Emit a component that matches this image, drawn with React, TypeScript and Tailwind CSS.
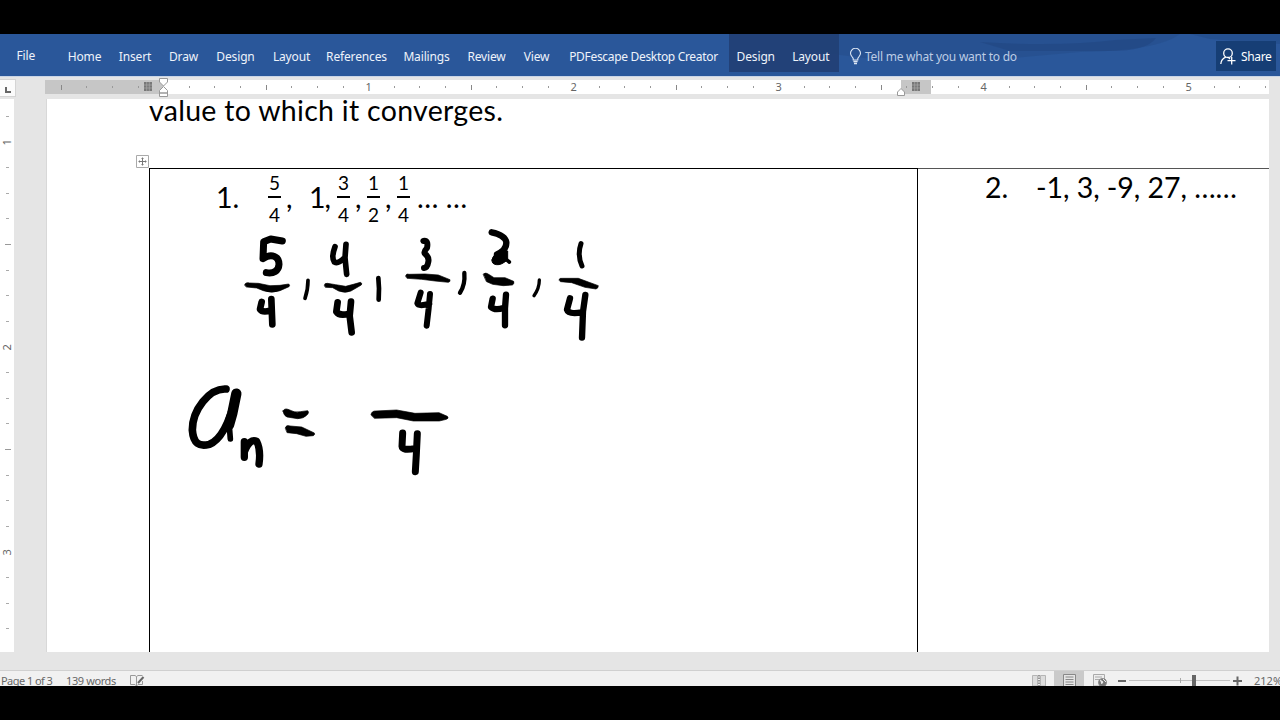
import React from "react";

const TABS: [string, string][] = [
  ["Home", "w-[52px]"],
  ["Insert", "w-[49px]"],
  ["Draw", "w-[48px]"],
  ["Design", "w-[56px]"],
  ["Layout", "w-[56px]"],
  ["References", "w-[74px]"],
  ["Mailings", "w-[66px]"],
  ["Review", "w-[54px]"],
  ["View", "w-[46px]"],
];

function Ribbon() {
  return (
    <header className="relative flex h-[42px] shrink-0 overflow-hidden bg-[#2a579a] text-[12px] tracking-[-0.15px] text-[#eef3fa]">
      <svg className="absolute left-[790px] top-0" width="490" height="42">
        <path d="M10 0H390Q368 17 290 18L200 26H90L10 16Z" fill="#234b88" opacity=".45" />
        <path d="M190 8Q270 13 325 6L366 4Q357 17 320 17H220Z" fill="#1e437d" opacity=".45" />
        <path d="M400 0H490V10L420 5Z" fill="#234b88" opacity=".6" />
      </svg>
      <div className="relative flex w-full">
        <div className="w-[58.5px] pl-[16.5px] leading-[43px]">File</div>
        <nav className="flex leading-[46px]">
          {TABS.map(([label, width]) => (
            <div key={label} className={`${width} whitespace-nowrap text-center`}>{label}</div>
          ))}
          <div className="w-[168px] whitespace-nowrap text-center tracking-[-0.32px]">PDFescape Desktop Creator</div>
        </nav>
        <div className="ml-[1.5px] flex h-[38px] w-[110px] bg-[#213f74]/90 leading-[46px]">
          <div className="w-[54px] text-center">Design</div>
          <div className="w-[57px] text-center">Layout</div>
        </div>
        <div className="flex flex-1 pl-[10px] leading-[46px] text-[#bccce5]">
          <svg className="mr-[3px] mt-[14px]" width="13" height="18" viewBox="0 0 13 18" fill="none" stroke="#dce6f4" strokeWidth="1.1">
            <path d="M4.2 12V10.5C3.5 8.8 1.5 7.7 1.5 5.3A5 5 0 0 1 11.5 5.3C11.5 7.7 9.5 8.8 8.8 10.5V12Z" />
            <path d="M4.4 13.5H8.6M5 15.5H8" strokeWidth="1.5" />
          </svg>
          <span className="tracking-[-0.24px]">Tell me what you want to do</span>
        </div>
        <div className="mr-[4px] mt-[7px] flex h-[30px] w-[60px] bg-[#163e75] pl-[4px] leading-[31px] tracking-[-0.35px] text-white">
          <svg className="mr-[5px] mt-[7px]" width="16" height="17" viewBox="0 0 16 17" fill="none" stroke="white" strokeWidth="1.3">
            <circle cx="8" cy="5.2" r="4.3" />
            <path d="M.8 16C1 12 3 10.4 5.8 9.2M8.6 9.6L10 11M7.5 12.7H15.5M11.7 9V16.5" />
          </svg>
          Share
        </div>
      </div>
    </header>
  );
}

function GridMark() {
  return (
    <svg width="8" height="9" viewBox="0 0 8 9">
      <path d="M0 0H8V9H0Z" fill="#777" />
      <path d="M0 3H8M0 6H8M2.7 0V9M5.3 0V9" stroke="#aaa" strokeWidth=".7" />
    </svg>
  );
}

const H_TICKS = Array.from({ length: 48 }, (_, i) => i - 4);
const V_TICKS = Array.from({ length: 21 }, (_, i) => i - 1);

function HorizontalRuler() {
  return (
    <div className="flex h-[23px] shrink-0 border-t border-[#c9d5e6] bg-[#e5e5e5]">
      <div className="mr-[29px] mt-[2px] flex h-[18px] w-[16px] items-center justify-center border border-l-0 border-[#d4d4d4] bg-[#fbfbfb]">
        <div className="ml-[1px] mt-[4px] h-[6px] w-[6px] border-b-2 border-l-2 border-[#666]" />
      </div>
      <div className="relative mt-[3px] h-[14px] w-[1224px] bg-white">
        <div className="flex h-full w-full overflow-hidden bg-[linear-gradient(90deg,#c6c6c6_118px,white_118px,white_856px,#c6c6c6_856px,#c6c6c6_886px,white_886px)] pl-[3.4px]">
          {H_TICKS.map((k) => (
            <div key={k} className="flex h-full w-[25.625px] shrink-0 items-center justify-center text-[11px] text-[#666]">
              {k > 0 && k % 8 === 0 ? (
                k / 8
              ) : k === 0 ? null : k % 4 === 0 ? (
                <div className="h-[5px] w-px bg-[#888]" />
              ) : (
                <div className="h-[2px] w-px bg-[#999]" />
              )}
            </div>
          ))}
        </div>
        <div className="absolute left-[99px] top-[2px]"><GridMark /></div>
        <div className="absolute left-[867px] top-[2px]"><GridMark /></div>
        <svg className="absolute left-[113px] top-[-3px]" width="11" height="24" fill="#fff" stroke="#999">
          <path d="M1.5 1.5H9.5V5L5.5 9L1.5 5ZM1.5 16V13.5L5.5 9.5L9.5 13.5V16ZM1.5 16H9.5V19.5H1.5Z" />
        </svg>
        <svg className="absolute left-[851px] top-[7px]" width="11" height="10" fill="#fff" stroke="#999">
          <path d="M1.5 8.5V5L5 1.5L8.5 5V8.5Z" />
        </svg>
      </div>
    </div>
  );
}

function VerticalRuler() {
  return (
    <div className="h-full w-[14px] shrink-0 overflow-hidden bg-white pt-[4.6px]">
      {V_TICKS.map((k) => (
        <div key={k} className="flex h-[25.625px] items-center justify-center pl-[1px] text-[11px] text-[#666]">
          {k % 8 === 0 ? (
            <span className="-rotate-90">{k / 8 + 1}</span>
          ) : k % 4 === 0 ? (
            <div className="h-px w-[6px] bg-[#999]" />
          ) : (
            <div className="h-px w-[3px] bg-[#aaa]" />
          )}
        </div>
      ))}
    </div>
  );
}

function Fraction({ top, bottom }: { top: string; bottom: string }) {
  return (
    <span className="flex w-[13px] flex-col items-center text-[19px] leading-[25px]">
      <span>{top}</span>
      <span className="mt-[1px] h-[2px] w-[13px] bg-black" />
      <span className="mt-[4px]">{bottom}</span>
    </span>
  );
}

function Ink() {
  return (
    <svg className="absolute left-0 top-0" width="1280" height="720" fill="none" stroke="#000" strokeLinecap="round" strokeLinejoin="round">
      <g transform="translate(230 225) scale(.33333)" strokeWidth="20">
        <path d="M157 48L122 42L101 50L99 101C125 83 147 95 147 118C146 138 130 147 109 143" strokeWidth="21" />
        <path d="M44 180C45 173 52 172 58 174L85 175L120 182L150 181L176 177Q181 181 177 185L150 197Q125 206 100 197L80 189L50 186Z" fill="#000" strokeWidth="2" />
        <path d="M95 231L90 253Q98 264 122 256M124 222L127 298" />
        <path d="M234 166Q234 195 225 220" strokeWidth="11" />
        <path d="M315 65Q303 97 313 111Q325 117 342 100M348 58L345 98L350 148" strokeWidth="17" />
        <path d="M283 181Q283 174 292 175L317 179L347 184L370 178L391 172Q398 175 394 180L363 198Q346 206 326 198L308 188L287 187Z" fill="#000" strokeWidth="2" />
        <path d="M323 232L319 260Q328 274 357 266M363 230L359 273L365 322" />
        <path d="M445 159L447 190L446 224" strokeWidth="14" />
      </g>
      <g transform="translate(400 225) scale(.33333)" strokeWidth="18">
        <path d="M70 48Q86 45 81 69Q71 79 74 85Q88 96 85 110Q82 128 72 129" />
        <path d="M17 153Q18 145 27 148L75 147L115 150L150 164Q152 170 145 172L105 168L65 163L22 160Z" fill="#000" strokeWidth="2" />
        <path d="M62 203L52 235Q56 246 88 236M90 207L86 250L80 302" />
        <path d="M193 144Q196 180 180 203" strokeWidth="13" />
        <path d="M275 22Q315 30 319 52Q320 75 291 88" strokeWidth="19" />
        <path d="M276 105Q279 86 303 79L323 78L323 104Q304 121 290 119Q275 118 276 105Z" fill="#000" strokeWidth="3" />
        <path d="M315 100L328 111" strokeWidth="11" />
        <path d="M250 147Q257 140 268 149L282 158L315 158L341 169Q344 177 337 180L310 182L278 178L260 170Z" fill="#000" strokeWidth="2" />
        <path d="M278 221L273 246Q285 258 312 248M318 209L315 250L315 301" strokeWidth="19" />
        <path d="M418 165Q418 190 402 212" strokeWidth="10" />
        <path d="M543 56Q531 90 546 123" strokeWidth="15" />
        <path d="M477 164Q478 158 487 160L535 160L595 182Q595 190 588 192L555 187L515 173L482 170Z" fill="#000" strokeWidth="2" />
        <path d="M510 220L501 254Q505 269 545 262M556 210L549 260L546 338" strokeWidth="19" />
      </g>
      <g transform="translate(180 375) scale(.33333)" strokeWidth="20">
        <path d="M138 42C88 39 37 105 37 165C40 206 58 216 88 208C118 197 146 152 168 65" strokeWidth="23" />
        <path d="M169 56L157 115L147 150" strokeWidth="31" />
        <path d="M147 140L151 192" strokeWidth="17" />
        <path d="M193 200L193 247M194 228Q210 189 230 199Q243 224 237 267" strokeWidth="22" />
        <path d="M309 108Q313 99 324 103Q345 115 361 110L383 107Q388 111 383 118Q371 132 353 131L321 126Q311 122 309 108Z" fill="#000" strokeWidth="2" />
        <path d="M316 158Q319 149 330 153L365 156L403 174Q406 179 400 182L378 184L350 176L322 173Z" fill="#000" strokeWidth="2" />
        <path d="M573 119Q575 107 588 108L650 105L705 115L777 113L802 124Q808 130 799 133L778 138L700 138L650 128L584 130Z" fill="#000" strokeWidth="2" />
        <path d="M668 174L666 214Q667 228 706 220M712 176L709 238L706 290" strokeWidth="21" />
      </g>
    </svg>
  );
}

function Page() {
  return (
    <main className="h-full w-[1222px] overflow-hidden bg-white font-['Lato','Noto_Sans',sans-serif] text-[28.5px] text-black">
      <p className="-mt-[9px] h-[78px] whitespace-pre pl-[102px] leading-[40px] tracking-[0.29px]">value to which it converges.</p>
      <div className="flex h-[484px] pl-[102px]">
        <section className="relative flex w-[769px] shrink-0 border-x border-t border-black">
          <svg className="absolute left-[-14px] top-[-14px]" width="13" height="13" fill="#fff" stroke="#aaa">
            <path d="M.5 .5H12.5V12.5H.5Z" />
            <path d="M6.5 2.5V10.5M2.5 6.5H10.5M5.5 3.5H7.5M5.5 9.5H7.5M3.5 5.5V7.5M9.5 5.5V7.5" stroke="#777" />
          </svg>
          <div className="flex h-[57px] items-start pl-[66px] pt-[1px]">
            <span className="w-[52px] pt-[7px] leading-[40px]">1.</span>
            <Fraction top="5" bottom="4" />
            <span className="w-[28px] pl-[5px] pt-[7px] leading-[40px]">,</span>
            <span className="w-[28px] pt-[7px] leading-[40px] tracking-[-1px]">1,</span>
            <Fraction top="3" bottom="4" />
            <span className="w-[17px] pl-[5px] pt-[7px] leading-[40px]">,</span>
            <Fraction top="1" bottom="2" />
            <span className="w-[17px] pl-[5px] pt-[7px] leading-[40px]">,</span>
            <Fraction top="1" bottom="4" />
            <span className="pl-[7px] pt-[7px] leading-[40px]">… …</span>
          </div>
        </section>
        <section className="flex flex-1 border-t border-[#555] pl-[67px] leading-[37px]">
          <span className="w-[51px]">2.</span>
          <span className="whitespace-pre tracking-[-0.05px]">-1, 3, -9, 27, ……</span>
        </section>
      </div>
    </main>
  );
}

function StatusBar() {
  return (
    <footer className="flex h-[16px] shrink-0 overflow-hidden border-t border-[#d0d0d0] bg-[#f1f1f1] text-[11px] leading-[20px] text-[#666]">
      <span className="w-[66px] whitespace-nowrap pl-[1px] tracking-[-0.55px]">Page 1 of 3</span>
      <span className="w-[64px] whitespace-nowrap tracking-[-0.4px]">139 words</span>
      <svg className="mt-[3px]" width="15" height="13" fill="none" stroke="#999">
        <path d="M.5 1.5H5L6.5 2.5L8 1.5H12.5M.5 1.5V10.5H5L6.5 12L8 10.5H12.5V7M6.5 2.5V12" />
        <path d="M8 9L13.5 3" stroke="#666" strokeWidth="2" />
      </svg>
      <div className="flex flex-1 justify-end">
        <svg className="mr-[8px] mt-[3px]" width="14" height="13" fill="#ddd" stroke="#b5b5b5">
          <path d="M.5 1.5H5.5V12H.5ZM8.5 1.5H13.5V12H8.5Z" />
          <path d="M7 1V13" stroke="#777" strokeDasharray="1.5 1" strokeWidth="1.5" />
        </svg>
        <div className="flex w-[30px] justify-center bg-[#cacaca] pt-[3px]">
          <svg width="13" height="13" fill="#e5e5e5" stroke="#888">
            <path d="M.5 .5H12.5V12.5H.5Z" />
            <path d="M2.5 3H10.5M2.5 5.5H10.5M2.5 8H10.5M2.5 10.5H10.5" />
          </svg>
        </div>
        <svg className="ml-[9px] mr-[11px] mt-[3px]" width="14" height="13" fill="#eee" stroke="#aaa">
          <path d="M.5 .5H11.5V12H.5Z" />
          <path d="M2 3H9M2 5.5H6" />
          <circle cx="9.5" cy="8.5" r="4" fill="#777" stroke="#888" />
          <path d="M7 6L10 8L8.5 10M10 5L13 8" stroke="#eee" />
        </svg>
        <div className="mt-[9px] h-[2px] w-[8px] bg-[#666]" />
        <div className="ml-[3px] mr-[3px] flex h-full w-[101px] items-center pt-[3px]">
          <div className="h-px w-[51px] bg-[#c0c0c0]" />
          <div className="h-[5px] w-px bg-[#aaa]" />
          <div className="h-px w-[11px] bg-[#c0c0c0]" />
          <div className="h-[11px] w-[4px] bg-[#666]" />
          <div className="h-px flex-1 bg-[#c0c0c0]" />
        </div>
        <svg className="mt-[5px]" width="10" height="10" stroke="#666" strokeWidth="2">
          <path d="M0 5H9M4.5 .5V9.5" />
        </svg>
        <span className="w-[37px] whitespace-nowrap pl-[11px]">212%</span>
      </div>
    </footer>
  );
}

export default function App() {
  return (
    <div className="relative flex h-[720px] w-[1280px] flex-col overflow-hidden bg-black pt-[34px] font-['Noto_Sans',sans-serif]">
      <Ribbon />
      <HorizontalRuler />
      <div className="flex h-[571px] shrink-0 bg-[#e5e5e5] pb-[18px]">
        <VerticalRuler />
        <div className="w-[33px] shrink-0 border-r border-[#d8d8d8]" />
        <Page />
      </div>
      <StatusBar />
      <Ink />
    </div>
  );
}
